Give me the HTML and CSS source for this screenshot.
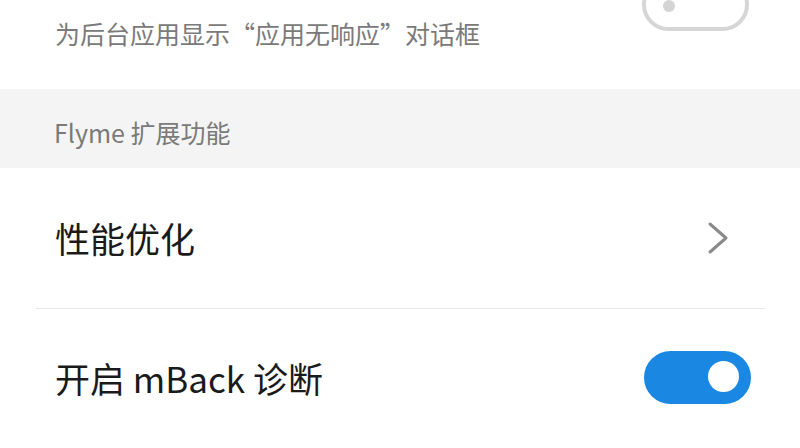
FILE: index.html
```html
<!DOCTYPE html>
<html lang="zh-CN">
<head>
<meta charset="utf-8">
<link rel="stylesheet" href="styles.css">
</head>
<body>
<div class="screen">
  <div class="item item-top">
    <div class="item-text">
      <div class="subtitle">为后台应用显示“应用无响应”对话框</div>
    </div>
    <div class="switch switch-off"><span class="dot"></span></div>
  </div>
  <div class="section-header">Flyme 扩展功能</div>
  <div class="item item-row">
    <div class="title">性能优化</div>
    <svg class="chevron" width="24" height="34" viewBox="0 0 24 34">
      <polyline points="4,3 20,17 4,31" fill="none" stroke="#8a8a8a" stroke-width="3" stroke-linecap="round" stroke-linejoin="round"/>
    </svg>
  </div>
  <div class="divider"></div>
  <div class="item item-row item-last">
    <div class="title">开启 mBack 诊断</div>
    <div class="switch switch-on"><span class="knob"></span></div>
  </div>
</div>
</body>
</html>
```
FILE: styles.css
```css
html, body {
  margin: 0;
  padding: 0;
  background: #ffffff;
}
.screen {
  width: 800px;
  height: 448px;
  overflow: hidden;
  font-family: "Noto Sans CJK SC", "Noto Sans", sans-serif;
}
.item {
  display: flex;
  justify-content: space-between;
  padding: 0 49px 0 55px;
}
.item-top {
  height: 89px;
  align-items: flex-start;
}
.item-text {
  padding-top: 15px;
}
.subtitle {
  font-size: 25px;
  line-height: 36px;
  color: #7a7a7a;
}
.switch {
  box-sizing: border-box;
  width: 107px;
  height: 53px;
  border-radius: 27px;
  display: flex;
  align-items: center;
  flex-shrink: 0;
}
.switch-off {
  margin-top: -22px;
  margin-right: 2px;
  border: 4px solid #d6d6d6;
  background: #ffffff;
  padding-left: 17px;
}
.dot {
  width: 12px;
  height: 12px;
  border-radius: 50%;
  background: #d4d4d4;
  margin-top: 2px;
}
.switch-on {
  background: #1a88e2;
  justify-content: flex-end;
  padding-right: 12px;
}
.knob {
  width: 31px;
  height: 31px;
  border-radius: 50%;
  background: #ffffff;
  margin-top: -2px;
}
.section-header {
  height: 79px;
  background: #f4f4f4;
  box-sizing: border-box;
  padding: 26px 0 0 54px;
  font-size: 25px;
  line-height: 34px;
  color: #7a7a7a;
}
.item-row {
  height: 140px;
  align-items: center;
}
.title {
  font-size: 35px;
  line-height: 46px;
  color: #1a1a1a;
}
.chevron {
  display: block;
  margin-right: 21px;
}
.divider {
  height: 1px;
  background: #e6e6e6;
  margin: 0 35px 0 36px;
}
.item-last {
  height: 137px;
}
```
